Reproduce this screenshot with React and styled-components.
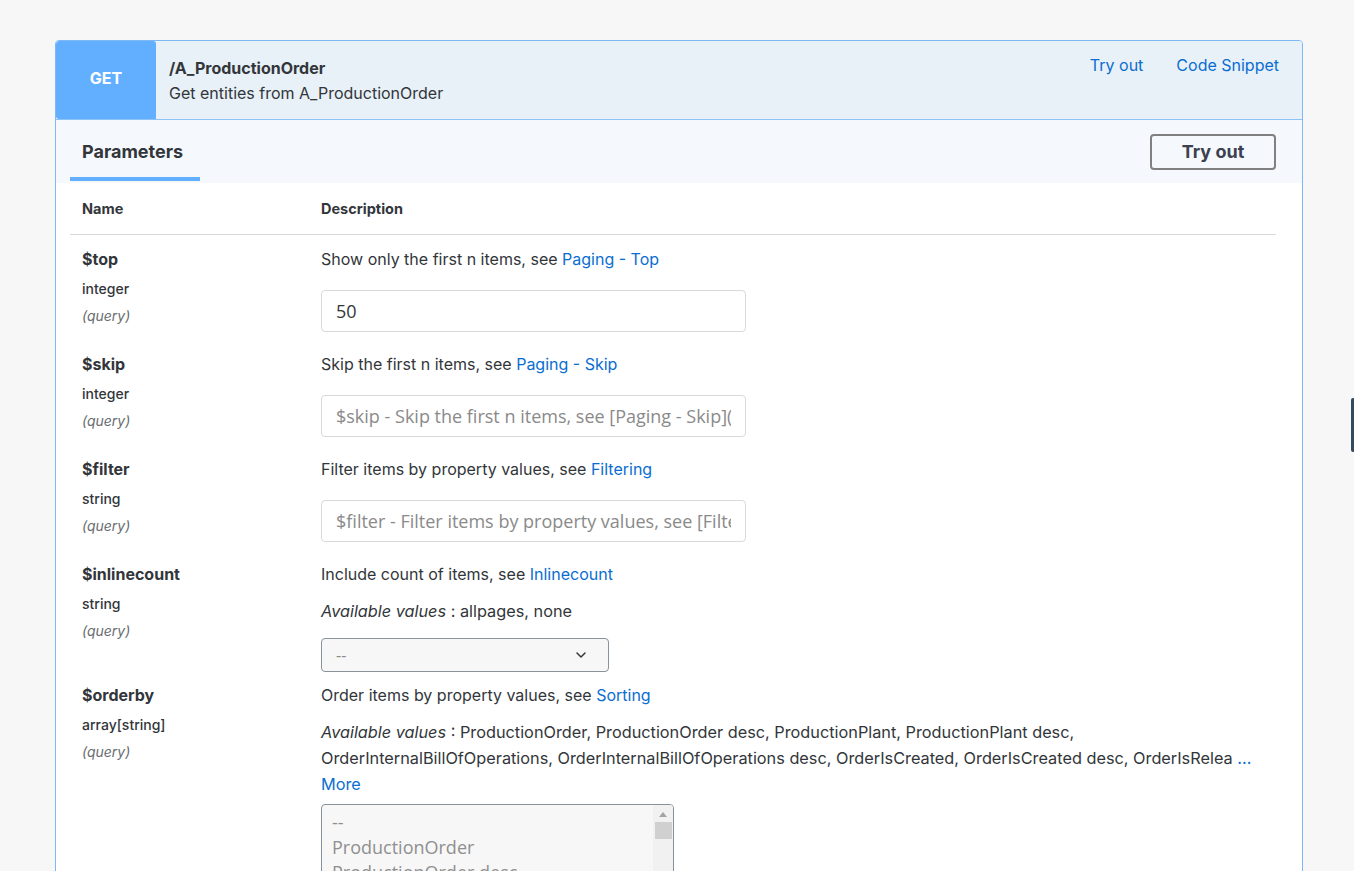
import React from "react";
import styled, { createGlobalStyle } from "styled-components";

const GlobalStyle = createGlobalStyle`
  body {
    margin: 0;
    background: #f7f7f7;
    font-family: Inter, "Liberation Sans", Arial, sans-serif;
    color: #32363a;
  }
`;

const params = [
  {
    name: "$top",
    type: "integer",
    desc: "Show only the first n items, see ",
    link: "Paging - Top",
    value: "50",
  },
  {
    name: "$skip",
    type: "integer",
    desc: "Skip the first n items, see ",
    link: "Paging - Skip",
    placeholder: "$skip - Skip the first n items, see [Paging - Skip](http://docs.oasis-open.org)",
  },
  {
    name: "$filter",
    type: "string",
    desc: "Filter items by property values, see ",
    link: "Filtering",
    placeholder: "$filter - Filter items by property values, see [Filtering](http://docs.oasis-open.org)",
  },
];

const orderOptions = [
  "--",
  "ProductionOrder",
  "ProductionOrder desc",
  "ProductionPlant",
  "ProductionPlant desc",
];

const App = () => {
  return (
    <Page>
      <GlobalStyle />
      <Card>
        <Header>
          <Method>GET</Method>
          <Summary>
            <Path>/A_ProductionOrder</Path>
            <Desc>Get entities from A_ProductionOrder</Desc>
          </Summary>
          <HeaderLinks>
            <HeaderLink>Try out</HeaderLink>
            <HeaderLink>Code Snippet</HeaderLink>
          </HeaderLinks>
        </Header>
        <TabBar>
          <Tab>Parameters</Tab>
          <TryButton>Try out</TryButton>
        </TabBar>
        <Table>
          <HeadRow>
            <HeadCell>Name</HeadCell>
            <HeadCell>Description</HeadCell>
          </HeadRow>
          <Body>
            {params.map((p) => (
              <Row key={p.name}>
                <NameCell>
                  <ParamName>{p.name}</ParamName>
                  <ParamType>{p.type}</ParamType>
                  <ParamIn>(query)</ParamIn>
                </NameCell>
                <DescCell>
                  <Text>
                    {p.desc}
                    <Link>{p.link}</Link>
                  </Text>
                  <Input
                    disabled
                    defaultValue={p.value}
                    placeholder={p.placeholder}
                  />
                </DescCell>
              </Row>
            ))}
            <Row $after={6}>
              <NameCell>
                <ParamName>$inlinecount</ParamName>
                <ParamType>string</ParamType>
                <ParamIn>(query)</ParamIn>
              </NameCell>
              <DescCell>
                <Text>
                  Include count of items, see <Link>Inlinecount</Link>
                </Text>
                <Values>
                  <em>Available values</em> : allpages, none
                </Values>
                <Select>
                  <span>--</span>
                  <svg width="14" height="14" viewBox="0 0 14 14">
                    <path
                      d="M3 5l4 4 4-4"
                      fill="none"
                      stroke="#32363a"
                      strokeWidth="1.5"
                      strokeLinecap="round"
                      strokeLinejoin="round"
                    />
                  </svg>
                </Select>
              </DescCell>
            </Row>
            <Row>
              <NameCell>
                <ParamName>$orderby</ParamName>
                <ParamType>array[string]</ParamType>
                <ParamIn>(query)</ParamIn>
              </NameCell>
              <DescCell>
                <Text>
                  Order items by property values, see <Link>Sorting</Link>
                </Text>
                <Values>
                  <em>Available values</em> : ProductionOrder, ProductionOrder
                  desc, ProductionPlant, ProductionPlant desc,
                  <br />
                  OrderInternalBillOfOperations, OrderInternalBillOfOperations
                  desc, OrderIsCreated, OrderIsCreated desc, OrderIsRelea{" "}
                  <Link>...</Link>
                  <br />
                  <Link>More</Link>
                </Values>
                <ListBox>
                  <Options>
                    {orderOptions.map((o) => (
                      <Option key={o}>{o}</Option>
                    ))}
                  </Options>
                  <ScrollTrack>
                    <svg width="10" height="8" viewBox="0 0 10 8">
                      <path d="M1 7l4-5 4 5z" fill="#a3a3a3" />
                    </svg>
                    <Thumb />
                  </ScrollTrack>
                </ListBox>
              </DescCell>
            </Row>
          </Body>
        </Table>
      </Card>
      <SideTab />
    </Page>
  );
};

const Page = styled.div`
  padding: 40px 51px 0 55px;
  min-height: 900px;
`;

const Card = styled.div`
  border: 1px solid #7db9f3;
  border-radius: 4px;
  background: #fff;
  overflow: hidden;
  padding-bottom: 40px;
`;

const Header = styled.div`
  display: flex;
  align-items: stretch;
  height: 78px;
  background: #e8f0f8;
  border-bottom: 1px solid #8fc3f5;
`;

const Method = styled.div`
  width: 100px;
  background: #61affe;
  color: #fff;
  font-weight: bold;
  font-size: 16px;
  display: flex;
  align-items: center;
  justify-content: center;
  padding-bottom: 4px;
  box-sizing: border-box;
  border-radius: 3px 3px 0 3px;
`;

const Summary = styled.div`
  flex: 1;
  padding: 16px 13px 0;
`;

const Path = styled.div`
  font-weight: bold;
  font-size: 16px;
  color: #32363a;
  line-height: 22px;
`;

const Desc = styled.div`
  font-size: 16px;
  line-height: 22px;
  margin-top: 3px;
  color: #32363a;
`;

const HeaderLinks = styled.div`
  display: flex;
  gap: 33px;
  padding: 13px 23px 0 0;
`;

const HeaderLink = styled.a`
  color: #0a6ed1;
  font-size: 16px;
  line-height: 22px;
  cursor: pointer;
`;

const TabBar = styled.div`
  display: flex;
  align-items: center;
  justify-content: space-between;
  height: 63px;
  background: #f5f9fd;
  padding: 0 26px 0 14px;
`;

const Tab = styled.div`
  align-self: flex-end;
  width: 130px;
  box-sizing: border-box;
  padding: 0 12px 15px;
  font-size: 18px;
  font-weight: bold;
  color: #32363a;
  border-bottom: 4px solid #61affe;
  margin-bottom: 2px;
`;

const TryButton = styled.button`
  width: 126px;
  height: 36px;
  background: transparent;
  border: 2px solid #808080;
  border-radius: 4px;
  font-family: Inter, "Liberation Sans", Arial, sans-serif;
  font-weight: bold;
  font-size: 18px;
  color: #3b4151;
  cursor: pointer;
`;

const Table = styled.div`
  padding: 0 26px 0 14px;
`;

const HeadRow = styled.div`
  display: grid;
  grid-template-columns: 251px 1fr;
  height: 51px;
  align-items: center;
  border-bottom: 1px solid #d9d9d9;
`;

const HeadCell = styled.div`
  padding: 0 12px;
  font-weight: bold;
  font-size: 14.5px;
  color: #32363a;
  &:last-child {
    padding-left: 0;
  }
`;

const Body = styled.div`
  padding-top: 7px;
`;

const Row = styled.div`
  display: grid;
  grid-template-columns: 251px 1fr;
  padding: 7px 0 ${(p) => (p.$after !== undefined ? p.$after : 7)}px;
`;

const NameCell = styled.div`
  padding-left: 12px;
`;

const ParamName = styled.div`
  font-weight: bold;
  font-size: 16px;
  line-height: 20px;
`;

const ParamType = styled.div`
  font-size: 14px;
  line-height: 20px;
  margin-top: 10px;
  font-weight: 500;
  color: #32363a;
`;

const ParamIn = styled.div`
  font-size: 14px;
  line-height: 20px;
  margin-top: 7px;
  font-style: italic;
  color: #6a6d70;
`;

const DescCell = styled.div`
  display: flex;
  flex-direction: column;
  align-items: flex-start;
`;

const Text = styled.div`
  font-size: 16px;
  line-height: 20px;
`;

const Link = styled.a`
  color: #0a6ed1;
  cursor: pointer;
`;

const Input = styled.input`
  margin: 21px 0 8px;
  width: 425px;
  height: 42px;
  box-sizing: border-box;
  border: 1px solid #d9d9d9;
  border-radius: 4px;
  background: #fff;
  padding: 0 14px;
  font-family: "Open Sans", sans-serif;
  font-size: 18px;
  color: #32363a;
  &::placeholder {
    color: #8a8a8a;
  }
`;

const Values = styled.div`
  margin-top: 14px;
  font-size: 16.3px;
  line-height: 26px;
  em {
    font-style: italic;
  }
`;

const Select = styled.div`
  margin-top: 14px;
  width: 288px;
  height: 34px;
  box-sizing: border-box;
  border: 1px solid #89919a;
  border-radius: 4px;
  background: #f7f7f7;
  display: flex;
  align-items: center;
  justify-content: space-between;
  padding: 0 20px 0 14px;
  font-family: "Open Sans", sans-serif;
  color: #8a8a8a;
  font-size: 16px;
`;

const ListBox = styled.div`
  margin-top: 7px;
  width: 353px;
  height: 110px;
  box-sizing: border-box;
  border: 1px solid #89919a;
  border-radius: 4px;
  background: #f7f7f7;
  display: flex;
  overflow: hidden;
`;

const Options = styled.div`
  flex: 1;
  padding: 5px 10px;
  font-family: "Open Sans", sans-serif;
  font-size: 18px;
  line-height: 25px;
  color: #8f8f8f;
`;

const Option = styled.div`
  white-space: nowrap;
`;

const ScrollTrack = styled.div`
  width: 20px;
  background: #f1f1f1;
  display: flex;
  flex-direction: column;
  align-items: center;
  padding-top: 5px;
  gap: 4px;
`;

const Thumb = styled.div`
  width: 17px;
  height: 17px;
  background: #d0d0d0;
`;

const SideTab = styled.div`
  position: fixed;
  right: 0;
  top: 398px;
  width: 3px;
  height: 54px;
  background: #354a5f;
  border-radius: 2px 0 0 2px;
`;

export default App;
